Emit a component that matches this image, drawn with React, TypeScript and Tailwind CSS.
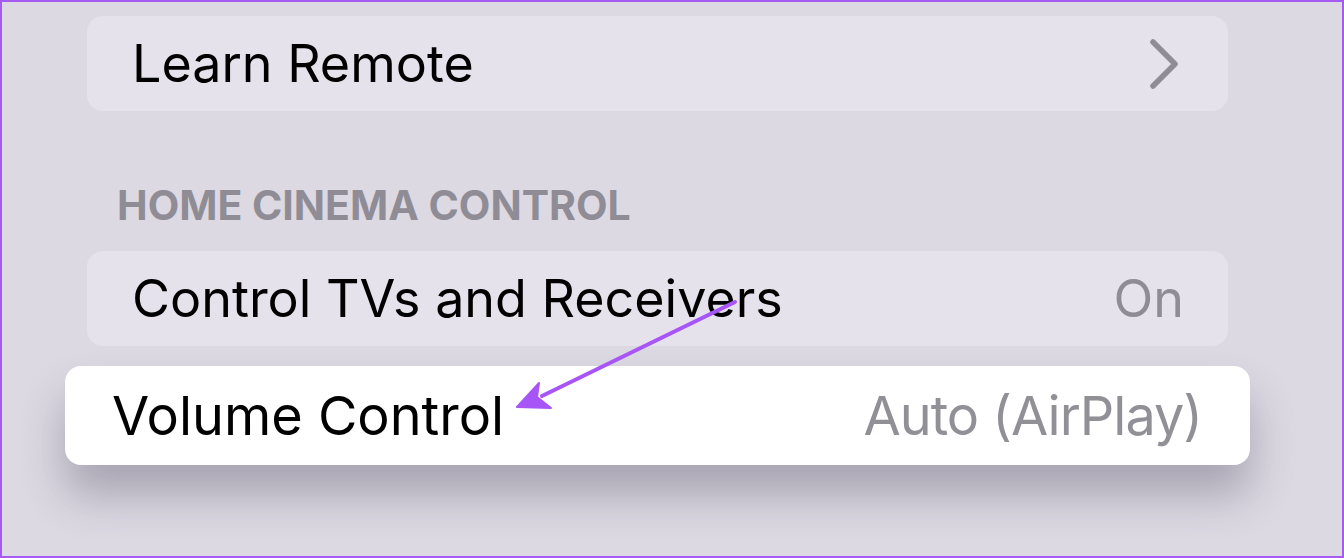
import React from 'react';

function Chevron() {
  return (
    <svg width="30" height="52" viewBox="0 0 30 52" fill="none" className="text-[#8e8c95]">
      <path d="M4 4 L26 26 L4 48" stroke="currentColor" strokeWidth="5.5" strokeLinecap="round" strokeLinejoin="round" />
    </svg>
  );
}

export default function App() {
  return (
    <div
      className="relative w-[1344px] h-[558px] overflow-hidden border-2 border-[#a55af2] bg-[#dcd9e3]"
      style={{ fontFamily: 'Inter, "Noto Sans", sans-serif' }}
    >
      <div className="flex flex-col pt-[14px]">
        {/* Learn Remote */}
        <div className="ml-[85px] mr-[114px] h-[95px] rounded-[16px] bg-[#e5e2eb] flex items-center justify-between pl-[45px] pr-[49px]">
          <span className="text-[52px] text-black">Learn Remote</span>
          <Chevron />
        </div>

        {/* Section header */}
        <div className="mt-[74px] ml-[115px] text-[41px] font-bold text-[#8f8c96] leading-none">
          HOME CINEMA CONTROL
        </div>

        {/* Control TVs */}
        <div className="mt-[25px] ml-[85px] mr-[114px] h-[95px] rounded-[16px] bg-[#e5e2eb] flex items-center justify-between pl-[45px] pr-[44px]">
          <span className="text-[52px] text-black">Control TVs and Receivers</span>
          <span className="text-[52px] text-[#8e8c95]">On</span>
        </div>

        {/* Volume Control (focused) */}
        <div className="mt-[20px] ml-[63px] mr-[92px] h-[99px] rounded-[16px] bg-white flex items-center justify-between pl-[47px] pr-[48px] shadow-[0_30px_44px_rgba(60,55,75,0.32)]">
          <span className="text-[54px] text-black">Volume Control</span>
          <span className="text-[54px] tracking-[-1px] text-[#929097]">Auto (AirPlay)</span>
        </div>
      </div>

      {/* Annotation arrow */}
      <svg className="absolute left-0 top-0" width="1344" height="558" viewBox="0 0 1344 558" fill="none">
        <line x1="733" y1="300" x2="540" y2="394" stroke="#a855f7" strokeWidth="4" strokeLinecap="round" />
        <path d="M515 405 L537 381 L535 395 L549 406 Z" fill="#a855f7" stroke="#a855f7" strokeWidth="2" strokeLinejoin="round" />
      </svg>
    </div>
  );
}
